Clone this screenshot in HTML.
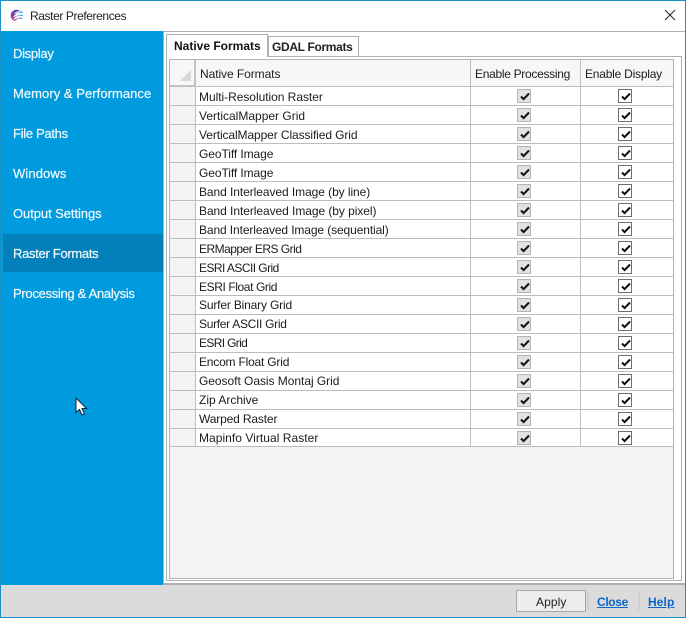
<!DOCTYPE html>
<html><head><meta charset="utf-8"><style>
html,body{margin:0;padding:0;background:#fff}
#w{position:relative;width:686px;height:618px;overflow:hidden;background:#fff;font-family:"Liberation Sans",sans-serif;font-size:12px;color:#222}
#w div{position:absolute;box-sizing:border-box}
.t{white-space:nowrap;line-height:16px}
.n{left:13px;color:#f2fafe;font-size:13px;font-weight:400;white-space:nowrap;line-height:16px;-webkit-text-stroke:0.2px #f2fafe}
.hl{left:170px;width:503px;height:1px;background:#bdbdbd}
.r{left:199px;white-space:nowrap;line-height:16px;color:#1c1c1c;font-size:12px}
.c{width:14px;height:14px;border:1px solid #8a8a8a;background:#fff}
.c.g{background:#e2e2e2;border-color:#b4b4b4;left:517px}
.c.w{left:618px;border-color:#6e6e6e}
.c svg{position:absolute;left:1px;top:0}
</style></head><body><div id="w">
<svg width="0" height="0" style="position:absolute"><defs><path id="k" d="M2 6.5l2.6 2.6L10 3.5" fill="none" stroke="#111" stroke-width="2"/><linearGradient id="lg" x1="0" y1="0" x2="0" y2="1"><stop offset="0" stop-color="#5a4fb0"/><stop offset="0.55" stop-color="#8a3a92"/><stop offset="1" stop-color="#c2447e"/></linearGradient></defs></svg>
<div style="left:0;top:0;width:686px;height:618px;border:1px solid #1b8ec6;z-index:9;"></div>
<svg style="position:absolute;left:10px;top:9px" width="14" height="13" viewBox="0 0 14 13"><circle cx="6.5" cy="6.5" r="5.8" fill="url(#lg)"/><path d="M4 5C6 2.5 10 1 14 1.5V13H4C5 11.5 7 10 9 9.5C7 9.5 5 10 3 11C4 9 6 7.5 8 7C6.5 7 5 7.5 3 8.5C4 6.5 5 5.5 7 4.5C6 4.5 5 4.7 4 5z" fill="#fff"/><path d="M6 3.6C8 2.6 10 2.2 12.2 2.6L12.8 4C10.5 3.5 8.5 3.5 6 3.6z M6 6.5C8.5 5.6 10.5 5.5 13 6V7.2C10.5 6.6 8.5 6.4 6 6.5z M6 9.3C8.5 8.6 10.5 8.6 12.6 9L12 10.2C10 9.6 8 9.3 6 9.3z" fill="#2a9bd8"/></svg>
<div class="t" style="left:30px;top:8px;color:#222;font-size:12px;letter-spacing:-0.4px">Raster Preferences</div>
<svg style="position:absolute;left:664px;top:9px" width="12" height="12"><path d="M1 1L11 11M11 1L1 11" stroke="#222" stroke-width="1" fill="none"/></svg>
<div style="left:1px;top:31px;width:162px;height:554px;background:#009ade"></div>
<div style="left:3px;top:234px;width:160px;height:38px;background:#0380b9"></div>
<div class="n" style="top:46px;letter-spacing:-0.3px">Display</div>
<div class="n" style="top:86px;letter-spacing:0.05px">Memory &amp; Performance</div>
<div class="n" style="top:126px;letter-spacing:-0.3px">File Paths</div>
<div class="n" style="top:166px;letter-spacing:0.1px">Windows</div>
<div class="n" style="top:206px;letter-spacing:-0.07px">Output Settings</div>
<div class="n" style="top:246px;letter-spacing:-0.3px">Raster Formats</div>
<div class="n" style="top:286px;letter-spacing:-0.3px">Processing &amp; Analysis</div>
<svg style="position:absolute;left:75px;top:397px" width="13" height="20"><path d="M1 1V15.5L4.5 12.5L7 18L9.5 17L7 11.5H11.5z" fill="#fff" stroke="#10243a" stroke-width="1"/></svg>
<div style="left:163px;top:31px;width:522px;height:1px;background:#b0b0b0"></div>
<div style="left:163px;top:31px;width:1px;height:554px;background:#b0b0b0"></div>
<div style="left:166px;top:56px;width:516px;height:525px;border:1px solid #b0b0b0;background:#fff"></div>
<div style="left:164px;top:583px;width:521px;height:2px;background:#b0b0b0"></div>
<div style="left:268px;top:36px;width:91px;height:21px;border:1px solid #b0b0b0;background:#fff"></div>
<div style="left:166px;top:34px;width:102px;height:23px;border:1px solid #b0b0b0;border-bottom:0;background:#fff"></div>
<div class="t" style="left:174px;top:38px;font-weight:700;color:#111">Native Formats</div>
<div class="t" style="left:272px;top:39px;font-weight:700;color:#222;letter-spacing:-0.33px">GDAL Formats</div>
<div style="left:169px;top:59px;width:505px;height:520px;border:1px solid #b4b4b4;background:#f3f3f3"></div>
<div style="left:170px;top:60px;width:503px;height:26px;background:#f7f7f7"></div>
<div style="left:170px;top:86px;width:26px;height:361px;background:#f3f3f3"></div>
<div style="left:196px;top:87px;width:477px;height:360px;background:#fff"></div>
<svg style="position:absolute;left:170px;top:60px" width="26" height="27"><path d="M21 10V21H10z" fill="#d8d8d8"/><path d="M0 26H25V0" fill="none" stroke="#8c8c8c"/></svg>
<div style="left:195px;top:87px;width:1px;height:360px;background:#bdbdbd"></div>
<div style="left:470px;top:60px;width:1px;height:387px;background:#bdbdbd"></div>
<div style="left:580px;top:60px;width:1px;height:387px;background:#bdbdbd"></div>
<div style="left:196px;top:86px;width:477px;height:1px;background:#bdbdbd"></div>
<div class="hl" style="top:105px"></div><div class="hl" style="top:124px"></div><div class="hl" style="top:143px"></div><div class="hl" style="top:162px"></div><div class="hl" style="top:181px"></div><div class="hl" style="top:200px"></div><div class="hl" style="top:219px"></div><div class="hl" style="top:238px"></div><div class="hl" style="top:257px"></div><div class="hl" style="top:276px"></div><div class="hl" style="top:295px"></div><div class="hl" style="top:314px"></div><div class="hl" style="top:333px"></div><div class="hl" style="top:352px"></div><div class="hl" style="top:371px"></div><div class="hl" style="top:390px"></div><div class="hl" style="top:409px"></div><div class="hl" style="top:428px"></div><div class="hl" style="top:446px"></div>
<div class="r" style="left:200px;top:66px;letter-spacing:-0.07px">Native Formats</div>
<div class="r" style="left:475px;top:66px;letter-spacing:-0.3px">Enable Processing</div>
<div class="r" style="left:585px;top:66px;letter-spacing:-0.22px">Enable Display</div>
<div class="r" style="top:89px;letter-spacing:-0.04px">Multi-Resolution Raster</div>
<div class="r" style="top:108px">VerticalMapper Grid</div>
<div class="r" style="top:127px;letter-spacing:-0.1px">VerticalMapper Classified Grid</div>
<div class="r" style="top:146px;letter-spacing:-0.08px">GeoTiff Image</div>
<div class="r" style="top:165px;letter-spacing:-0.08px">GeoTiff Image</div>
<div class="r" style="top:184px;letter-spacing:-0.07px">Band Interleaved Image (by line)</div>
<div class="r" style="top:203px;letter-spacing:-0.06px">Band Interleaved Image (by pixel)</div>
<div class="r" style="top:222px;letter-spacing:-0.11px">Band Interleaved Image (sequential)</div>
<div class="r" style="top:241px;letter-spacing:-0.53px">ERMapper ERS Grid</div>
<div class="r" style="top:260px;letter-spacing:-0.55px">ESRI ASCII Grid</div>
<div class="r" style="top:279px;letter-spacing:-0.4px">ESRI Float Grid</div>
<div class="r" style="top:297px;letter-spacing:-0.17px">Surfer Binary Grid</div>
<div class="r" style="top:316px;letter-spacing:-0.3px">Surfer ASCII Grid</div>
<div class="r" style="top:335px;letter-spacing:-0.65px">ESRI Grid</div>
<div class="r" style="top:354px;letter-spacing:-0.2px">Encom Float Grid</div>
<div class="r" style="top:373px;letter-spacing:-0.04px">Geosoft Oasis Montaj Grid</div>
<div class="r" style="top:392px">Zip Archive</div>
<div class="r" style="top:411px;letter-spacing:-0.15px">Warped Raster</div>
<div class="r" style="top:430px;letter-spacing:0.04px">Mapinfo Virtual Raster</div>
<div class="c g" style="top:89px"><svg width="12" height="12"><use href="#k"/></svg></div><div class="c w" style="top:89px"><svg width="12" height="12"><use href="#k"/></svg></div>
<div class="c g" style="top:108px"><svg width="12" height="12"><use href="#k"/></svg></div><div class="c w" style="top:108px"><svg width="12" height="12"><use href="#k"/></svg></div>
<div class="c g" style="top:127px"><svg width="12" height="12"><use href="#k"/></svg></div><div class="c w" style="top:127px"><svg width="12" height="12"><use href="#k"/></svg></div>
<div class="c g" style="top:146px"><svg width="12" height="12"><use href="#k"/></svg></div><div class="c w" style="top:146px"><svg width="12" height="12"><use href="#k"/></svg></div>
<div class="c g" style="top:165px"><svg width="12" height="12"><use href="#k"/></svg></div><div class="c w" style="top:165px"><svg width="12" height="12"><use href="#k"/></svg></div>
<div class="c g" style="top:184px"><svg width="12" height="12"><use href="#k"/></svg></div><div class="c w" style="top:184px"><svg width="12" height="12"><use href="#k"/></svg></div>
<div class="c g" style="top:203px"><svg width="12" height="12"><use href="#k"/></svg></div><div class="c w" style="top:203px"><svg width="12" height="12"><use href="#k"/></svg></div>
<div class="c g" style="top:222px"><svg width="12" height="12"><use href="#k"/></svg></div><div class="c w" style="top:222px"><svg width="12" height="12"><use href="#k"/></svg></div>
<div class="c g" style="top:241px"><svg width="12" height="12"><use href="#k"/></svg></div><div class="c w" style="top:241px"><svg width="12" height="12"><use href="#k"/></svg></div>
<div class="c g" style="top:260px"><svg width="12" height="12"><use href="#k"/></svg></div><div class="c w" style="top:260px"><svg width="12" height="12"><use href="#k"/></svg></div>
<div class="c g" style="top:279px"><svg width="12" height="12"><use href="#k"/></svg></div><div class="c w" style="top:279px"><svg width="12" height="12"><use href="#k"/></svg></div>
<div class="c g" style="top:298px"><svg width="12" height="12"><use href="#k"/></svg></div><div class="c w" style="top:298px"><svg width="12" height="12"><use href="#k"/></svg></div>
<div class="c g" style="top:317px"><svg width="12" height="12"><use href="#k"/></svg></div><div class="c w" style="top:317px"><svg width="12" height="12"><use href="#k"/></svg></div>
<div class="c g" style="top:336px"><svg width="12" height="12"><use href="#k"/></svg></div><div class="c w" style="top:336px"><svg width="12" height="12"><use href="#k"/></svg></div>
<div class="c g" style="top:355px"><svg width="12" height="12"><use href="#k"/></svg></div><div class="c w" style="top:355px"><svg width="12" height="12"><use href="#k"/></svg></div>
<div class="c g" style="top:374px"><svg width="12" height="12"><use href="#k"/></svg></div><div class="c w" style="top:374px"><svg width="12" height="12"><use href="#k"/></svg></div>
<div class="c g" style="top:393px"><svg width="12" height="12"><use href="#k"/></svg></div><div class="c w" style="top:393px"><svg width="12" height="12"><use href="#k"/></svg></div>
<div class="c g" style="top:412px"><svg width="12" height="12"><use href="#k"/></svg></div><div class="c w" style="top:412px"><svg width="12" height="12"><use href="#k"/></svg></div>
<div class="c g" style="top:431px"><svg width="12" height="12"><use href="#k"/></svg></div><div class="c w" style="top:431px"><svg width="12" height="12"><use href="#k"/></svg></div>
<div style="left:1px;top:585px;width:684px;height:32px;background:#dbdbdb"></div>
<div style="left:516px;top:590px;width:70px;height:22px;border:1px solid #a8a8a8;background:#ededed"></div>
<div class="t" style="left:536px;top:594px;color:#222;letter-spacing:0.1px">Apply</div>
<div style="left:587px;top:592px;width:2px;height:18px;background:#cfcfcf"></div>
<div style="left:638px;top:592px;width:2px;height:18px;background:#cfcfcf"></div>
<div class="t" style="left:597px;top:594px;color:#0b66c8;font-weight:700;text-decoration:underline;letter-spacing:-0.35px">Close</div>
<div class="t" style="left:648px;top:594px;color:#0b66c8;font-weight:700;text-decoration:underline;letter-spacing:0.1px">Help</div>
</div></body></html>
